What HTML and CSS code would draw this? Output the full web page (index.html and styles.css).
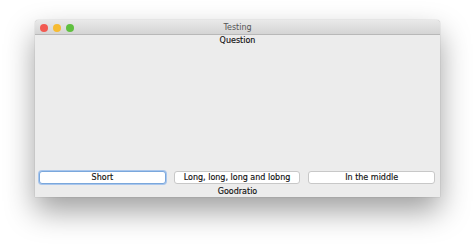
FILE: index.html
```html
<!DOCTYPE html>
<html lang="en">
<head>
    <meta charset="UTF-8">
    <title>Testing</title>
    <link rel="stylesheet" href="styles.css">
</head>
<body>
    <div class="window">
        <div class="titlebar">
            <div class="lights">
                <span class="light red"></span>
                <span class="light yellow"></span>
                <span class="light green"></span>
            </div>
            <div class="title">Testing</div>
        </div>
        <div class="content">
            <div class="label top">Question</div>
            <div class="spacer"></div>
            <div class="buttons">
                <button class="btn focused">Short</button>
                <button class="btn">Long, long, long and lobng</button>
                <button class="btn">In the middle</button>
            </div>
            <div class="label bottom">Goodratio</div>
        </div>
    </div>
</body>
</html>
```

FILE: styles.css
```css
body {
    margin: 0;
    padding: 20px 0 0 35px;
    background-color: #fff;
    font-family: "DejaVu Sans", sans-serif;
    width: 474px;
    height: 248px;
    box-sizing: border-box;
    overflow: hidden;
}
.window {
    width: 405px;
    height: 177px;
    border-radius: 4px 4px 0 0;
    background-color: #ececec;
    box-shadow: 0 14px 30px rgba(0, 0, 0, 0.38), 0 0 1px rgba(0, 0, 0, 0.45);
    display: flex;
    flex-direction: column;
    overflow: hidden;
}
.titlebar {
    height: 14px;
    flex: none;
    display: flex;
    align-items: center;
    background: linear-gradient(#e9e9e9, #d4d4d4);
    border-bottom: 1px solid #b8b8b8;
    position: relative;
}
.lights {
    display: flex;
    gap: 5px;
    padding-left: 5px;
    padding-top: 1px;
}
.light {
    width: 8px;
    height: 8px;
    border-radius: 50%;
}
.red { background-color: #f25a52; }
.yellow { background-color: #f6bb32; }
.green { background-color: #5fc03f; }
.title {
    position: absolute;
    top: 1px;
    bottom: 0;
    left: 0;
    right: 0;
    text-align: center;
    line-height: 14px;
    font-size: 8px;
    color: #555;
}
.content {
    flex: 1;
    display: flex;
    flex-direction: column;
}
.label {
    text-align: center;
    font-size: 8px;
    color: #111;
    height: 10px;
    line-height: 10px;
    -webkit-text-stroke: 0.15px #111;
}
.label.top {
    padding-top: 1px;
}
.label.bottom {
    margin-top: 3px;
}
.spacer {
    flex: 1;
}
.buttons {
    display: flex;
    gap: 8px;
    padding: 0 5px 0 4px;
}
.btn {
    flex: 1;
    height: 13px;
    padding: 0;
    background-color: #fff;
    border: 1px solid #c8c8c8;
    border-radius: 3px;
    font-family: "DejaVu Sans", sans-serif;
    font-size: 8px;
    color: #111;
    line-height: 11px;
    -webkit-text-stroke: 0.15px #111;
}
.btn.focused {
    border-color: #7aa7dc;
    box-shadow: 0 0 0 1px #a9c6ec;
}
```
